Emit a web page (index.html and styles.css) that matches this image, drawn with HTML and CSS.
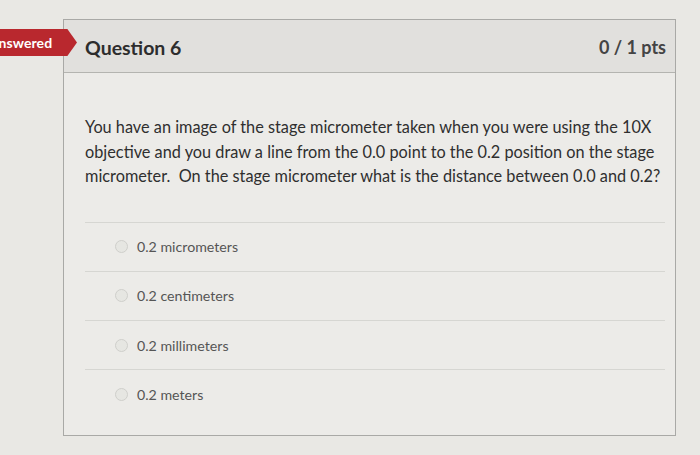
FILE: index.html
```html
<!DOCTYPE html>
<html>
<head>
<meta charset="utf-8">
<link rel="stylesheet" href="styles.css">
</head>
<body>
<div class="page">
  <div class="badge"><span class="badge-text">Unanswered</span></div>
  <div class="card">
    <div class="card-header">
      <div class="q-title">Question 6</div>
      <div class="q-pts">0 / 1 pts</div>
    </div>
    <div class="card-body">
      <p class="q-text">You have an image of the stage micrometer taken when you were using the 10X objective and you draw a line from the 0.0 point to the 0.2 position on the stage micrometer.&nbsp; On the stage micrometer what is the distance between 0.0 and 0.2?</p>
      <div class="answers">
        <div class="answer"><span class="radio"></span><span class="a-label">0.2 micrometers</span></div>
        <div class="answer"><span class="radio"></span><span class="a-label">0.2 centimeters</span></div>
        <div class="answer"><span class="radio"></span><span class="a-label">0.2 millimeters</span></div>
        <div class="answer"><span class="radio"></span><span class="a-label">0.2 meters</span></div>
      </div>
    </div>
  </div>
</div>
</body>
</html>
```

FILE: styles.css
```css
html, body {
  margin: 0;
  padding: 0;
  background: #e9e8e4;
  font-family: Lato, "Open Sans", sans-serif;
  color: #333;
}
.page {
  position: relative;
  width: 700px;
  height: 455px;
  overflow: hidden;
  padding: 19px 0 0 63px;
  box-sizing: border-box;
}
.badge {
  position: absolute;
  left: -30px;
  top: 29px;
  height: 27px;
  width: 107px;
  background: #b9282e;
  clip-path: polygon(0 0, 91% 0, 100% 50%, 91% 100%, 0 100%);
  display: flex;
  align-items: center;
}
.badge-text {
  color: #fff;
  font-weight: 700;
  font-size: 14px;
  padding-left: 3px;
  letter-spacing: 0.1px;
}
.card {
  width: 613px;
  height: 417px;
  box-sizing: border-box;
  border: 1px solid #a9a9a6;
  background: #ecebe8;
  display: flex;
  flex-direction: column;
}
.card-header {
  height: 53px;
  box-sizing: border-box;
  background: #e1e0dd;
  border-bottom: 1px solid #b4b4b0;
  display: flex;
  align-items: center;
  justify-content: space-between;
  padding: 2px 9px 0 21px;
}
.q-title {
  font-size: 19.5px;
  font-weight: 700;
  color: #2d2d2d;
}
.q-pts {
  font-size: 18px;
  font-weight: 700;
  color: #444;
}
.card-body {
  padding: 42px 10px 0 21px;
}
.q-text {
  margin: 0;
  font-size: 16.3px;
  line-height: 24.5px;
  color: #2f2f2f;
}
.answers {
  margin-top: 33px;
}
.answer {
  height: 48.3px;
  border-top: 1px solid #d6d6d2;
  display: flex;
  align-items: center;
  padding-left: 30px;
}
.radio {
  width: 11px;
  height: 11px;
  border: 1px solid #cfcfcb;
  border-radius: 50%;
  background: #e6e6e2;
  margin-right: 9px;
}
.a-label {
  font-size: 14.2px;
  color: #555;
}
```
